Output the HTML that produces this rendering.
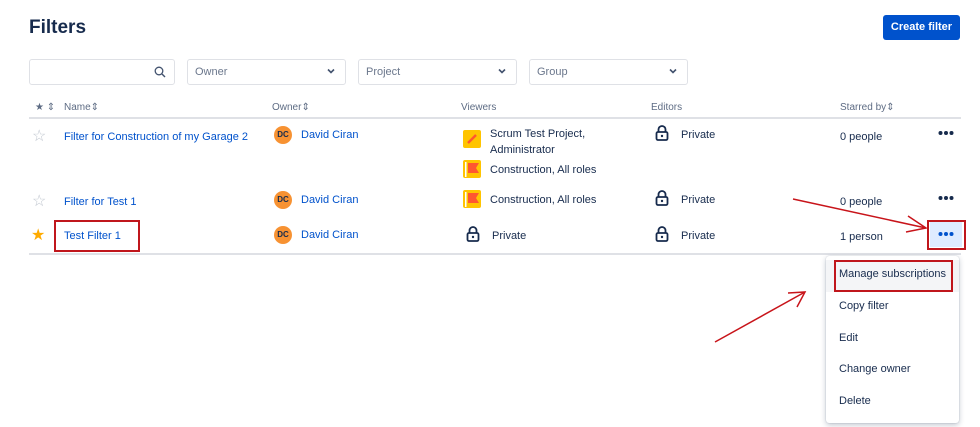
<!DOCTYPE html>
<html><head><meta charset="utf-8"><style>
*{margin:0;padding:0;box-sizing:border-box}
body{width:980px;height:427px;background:#fff;font-family:"Liberation Sans",sans-serif;position:relative;overflow:hidden;color:#172b4d;font-size:11px}
.a{position:absolute;white-space:nowrap}
.box{position:absolute;top:59px;height:26px;border:1px solid #dfe1e6;border-radius:3px;background:#fff;color:#6b778c;font-size:11px;padding:6px 0 0 7px}
.chev{position:absolute;right:10px;top:8px}
.link{color:#0052cc;font-size:11px}
.hd{color:#5e6c84;font-size:10px}
.av{position:absolute;width:18px;height:18px;border-radius:50%;background:#f79232;color:#172b4d;font-size:8px;font-weight:bold;text-align:center;line-height:18px}
.ic{position:absolute;width:18px;height:18px;background:#ffc400;border-radius:2px}
.dots{position:absolute}
.mi{position:absolute;left:839px;font-size:11px;color:#172b4d}
</style></head><body>
<div class="a" style="left:29px;top:17px;font-size:19px;font-weight:bold;color:#172b4d">Filters</div>
<div class="a" style="left:883px;top:15px;width:77px;height:25px;background:#0052cc;border-radius:3px;color:#fff;font-weight:bold;font-size:11px;text-align:center;line-height:25px">Create filter</div>

<div class="box" style="left:29px;width:146px"><svg style="position:absolute;right:8px;top:6px" width="12" height="12" viewBox="0 0 12 12"><circle cx="5" cy="5" r="3.8" fill="none" stroke="#42526e" stroke-width="1.3"/><line x1="8" y1="8" x2="11" y2="11" stroke="#42526e" stroke-width="1.4"/></svg></div>
<div class="box" style="left:187px;width:159px">Owner<svg class="chev" width="8" height="6"><path d="M1 1.5l3 3 3-3" fill="none" stroke="#42526e" stroke-width="1.6"/></svg></div>
<div class="box" style="left:358px;width:159px">Project<svg class="chev" width="8" height="6"><path d="M1 1.5l3 3 3-3" fill="none" stroke="#42526e" stroke-width="1.6"/></svg></div>
<div class="box" style="left:529px;width:159px">Group<svg class="chev" width="8" height="6"><path d="M1 1.5l3 3 3-3" fill="none" stroke="#42526e" stroke-width="1.6"/></svg></div>

<div class="a hd" style="left:35px;top:102px">★ ⇕</div>
<div class="a hd" style="left:64px;top:102px">Name⇕</div>
<div class="a hd" style="left:272px;top:102px">Owner⇕</div>
<div class="a hd" style="left:461px;top:102px">Viewers</div>
<div class="a hd" style="left:651px;top:102px">Editors</div>
<div class="a hd" style="left:840px;top:102px">Starred by⇕</div>
<div class="a" style="left:29px;top:117px;width:932px;height:2px;background:#dfe1e6"></div>
<div class="a" style="left:29px;top:253px;width:932px;height:2px;background:#dfe1e6"></div>

<!-- row1 -->
<div class="a" style="left:32px;top:126px;font-size:16px;color:#c1c7d0">☆</div>
<div class="a link" style="left:64px;top:131px">Filter for Construction of my Garage 2</div>
<div class="av" style="left:274px;top:126px">DC</div>
<div class="a link" style="left:301px;top:129px">David Ciran</div>
<div class="ic" style="left:463px;top:130px"><svg width="18" height="18"><line x1="5" y1="13" x2="13" y2="5" stroke="#ff5630" stroke-width="2.5"/></svg></div>
<div class="a" style="left:490px;top:126px;font-size:11px;line-height:16px">Scrum Test Project,<br>Administrator</div>
<div class="ic" style="left:463px;top:160px"><svg width="18" height="18"><rect x="2" y="2" width="1.5" height="15" fill="#fff"/><path d="M5 3h11l-3 5 3 5H5z" fill="#ff5630"/></svg></div>
<div class="a" style="left:490px;top:164px">Construction, All roles</div>
<div class="a" style="left:655px;top:125px"><svg width="14" height="16" viewBox="0 0 14 16"><path d="M3.5 7V4.5a3.5 3.5 0 0 1 7 0V7" fill="none" stroke="#172b4d" stroke-width="1.8"/><rect x="1.5" y="7" width="11" height="8" rx="1.5" fill="none" stroke="#172b4d" stroke-width="1.8"/><circle cx="7" cy="11" r="1.2" fill="#172b4d"/></svg></div>
<div class="a" style="left:681px;top:129px">Private</div>
<div class="a" style="left:840px;top:131px">0 people</div>
<svg class="dots" style="left:938px;top:130px" width="16" height="6"><g fill="#172b4d"><circle cx="2.5" cy="3" r="2"/><circle cx="8" cy="3" r="2"/><circle cx="13.5" cy="3" r="2"/></g></svg>

<!-- row2 -->
<div class="a" style="left:32px;top:191px;font-size:16px;color:#c1c7d0">☆</div>
<div class="a link" style="left:64px;top:196px">Filter for Test 1</div>
<div class="av" style="left:274px;top:191px">DC</div>
<div class="a link" style="left:301px;top:194px">David Ciran</div>
<div class="ic" style="left:463px;top:190px"><svg width="18" height="18"><rect x="2" y="2" width="1.5" height="15" fill="#fff"/><path d="M5 3h11l-3 5 3 5H5z" fill="#ff5630"/></svg></div>
<div class="a" style="left:490px;top:194px">Construction, All roles</div>
<div class="a" style="left:655px;top:190px"><svg width="14" height="16" viewBox="0 0 14 16"><path d="M3.5 7V4.5a3.5 3.5 0 0 1 7 0V7" fill="none" stroke="#172b4d" stroke-width="1.8"/><rect x="1.5" y="7" width="11" height="8" rx="1.5" fill="none" stroke="#172b4d" stroke-width="1.8"/><circle cx="7" cy="11" r="1.2" fill="#172b4d"/></svg></div>
<div class="a" style="left:681px;top:194px">Private</div>
<div class="a" style="left:840px;top:196px">0 people</div>
<svg class="dots" style="left:938px;top:195px" width="16" height="6"><g fill="#172b4d"><circle cx="2.5" cy="3" r="2"/><circle cx="8" cy="3" r="2"/><circle cx="13.5" cy="3" r="2"/></g></svg>

<!-- row3 -->
<div class="a" style="left:31px;top:225px;font-size:16px;color:#ffab00">★</div>
<div class="a link" style="left:64px;top:230px">Test Filter 1</div>
<div class="a" style="left:54px;top:220px;width:86px;height:32px;border:2px solid #c0161c"></div>
<div class="av" style="left:274px;top:226px">DC</div>
<div class="a link" style="left:301px;top:229px">David Ciran</div>
<div class="a" style="left:466px;top:226px"><svg width="14" height="16" viewBox="0 0 14 16"><path d="M3.5 7V4.5a3.5 3.5 0 0 1 7 0V7" fill="none" stroke="#172b4d" stroke-width="1.8"/><rect x="1.5" y="7" width="11" height="8" rx="1.5" fill="none" stroke="#172b4d" stroke-width="1.8"/><circle cx="7" cy="11" r="1.2" fill="#172b4d"/></svg></div>
<div class="a" style="left:492px;top:230px">Private</div>
<div class="a" style="left:655px;top:226px"><svg width="14" height="16" viewBox="0 0 14 16"><path d="M3.5 7V4.5a3.5 3.5 0 0 1 7 0V7" fill="none" stroke="#172b4d" stroke-width="1.8"/><rect x="1.5" y="7" width="11" height="8" rx="1.5" fill="none" stroke="#172b4d" stroke-width="1.8"/><circle cx="7" cy="11" r="1.2" fill="#172b4d"/></svg></div>
<div class="a" style="left:681px;top:230px">Private</div>
<div class="a" style="left:840px;top:231px">1 person</div>
<div class="a" style="left:930px;top:222px;width:32px;height:25px;background:#deebff"></div>
<svg class="dots" style="left:938px;top:231px" width="16" height="6"><g fill="#0052cc"><circle cx="2.5" cy="3" r="2"/><circle cx="8" cy="3" r="2"/><circle cx="13.5" cy="3" r="2"/></g></svg>
<div class="a" style="left:927px;top:220px;width:39px;height:30px;border:2px solid #c0161c"></div>

<!-- menu -->
<div class="a" style="left:826px;top:256px;width:133px;height:167px;background:#fff;border-radius:3px;box-shadow:0 2px 6px rgba(9,30,66,.25),0 0 1px rgba(9,30,66,.3)"></div>
<div class="a" style="left:826px;top:260px;width:133px;height:32px;background:#f4f5f7"></div>
<div class="a" style="left:834px;top:260px;width:119px;height:32px;border:2px solid #c0161c"></div>
<div class="mi" style="top:268px">Manage subscriptions</div>
<div class="mi" style="top:300px">Copy filter</div>
<div class="mi" style="top:332px">Edit</div>
<div class="mi" style="top:363px">Change owner</div>
<div class="mi" style="top:395px">Delete</div>

<svg class="a" style="left:0;top:0" width="980" height="427">
<g stroke="#c8141a" stroke-width="1.5" fill="none">
<line x1="793" y1="199" x2="926" y2="228"/>
<path d="M908 216 L926 228 L906 232"/>
<line x1="715" y1="342" x2="805" y2="292"/>
<path d="M788 293 L805 292 L797 307"/>
</g></svg>
</body></html>
